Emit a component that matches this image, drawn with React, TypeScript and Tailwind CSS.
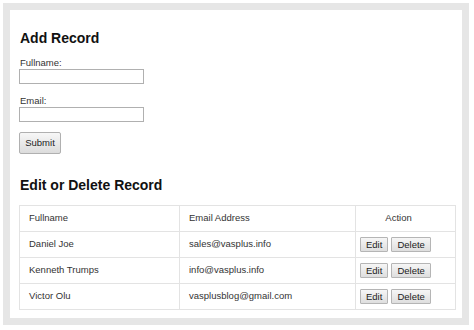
import React from 'react';

const records = [
  { name: 'Daniel Joe', email: 'sales@vasplus.info' },
  { name: 'Kenneth Trumps', email: 'info@vasplus.info' },
  { name: 'Victor Olu', email: 'vasplusblog@gmail.com' },
];

const SmallButton: React.FC<{ children: React.ReactNode }> = ({ children }) => (
  <button className="h-[15px] px-[5px] text-[9.5px] leading-none text-[#222] border border-[#b5b5b5] rounded-[1px] bg-gradient-to-b from-[#f6f6f6] to-[#dedede]">
    {children}
  </button>
);

export default function App() {
  return (
    <div className="w-[474px] h-[330px] bg-white p-[3px] font-['Liberation_Sans',Arial,sans-serif]">
      <div className="w-[466px] h-[322px] border-[7px] border-[#e6e6e6] bg-white pt-[20px] pl-[9px]">
        <h2 className="ml-[1px] text-[14px] leading-[16px] font-bold text-[#111]">Add Record</h2>

        <div className="mt-[11px] flex flex-col">
          <label className="ml-[1px] text-[9.5px] leading-[11px] text-[#333]">Fullname:</label>
          <input className="mt-px w-[125px] h-[15px] border border-[#b0b0b0] bg-white" />
          <label className="mt-[11px] ml-[1px] text-[9.5px] leading-[11px] text-[#333]">Email:</label>
          <input className="mt-px w-[125px] h-[15px] border border-[#b0b0b0] bg-white" />
          <button className="mt-[10px] w-[42px] h-[22px] text-[9.5px] text-[#222] border border-[#b0b0b0] rounded-[2px] bg-gradient-to-b from-[#f7f7f7] to-[#dcdcdc]">
            Submit
          </button>
        </div>

        <h2 className="mt-[23px] ml-[1px] text-[14px] leading-[16px] font-bold text-[#111]">Edit or Delete Record</h2>

        <table className="mt-[12px] w-[436px] table-fixed border-collapse text-[9.5px] text-[#333]">
          <colgroup>
            <col className="w-[160px]" />
            <col className="w-[176px]" />
            <col className="w-[100px]" />
          </colgroup>
          <thead>
            <tr className="h-[26px]">
              <th className="border border-[#e3e3e3] pl-[9px] text-left font-normal">Fullname</th>
              <th className="border border-[#e3e3e3] pl-[9px] text-left font-normal">Email Address</th>
              <th className="border border-[#e3e3e3] pr-[14px] text-center font-normal">Action</th>
            </tr>
          </thead>
          <tbody>
            {records.map((r) => (
              <tr key={r.name} className="h-[26px]">
                <td className="border border-[#e3e3e3] pl-[9px]">{r.name}</td>
                <td className="border border-[#e3e3e3] pl-[9px]">{r.email}</td>
                <td className="border border-[#e3e3e3] pl-[4px]">
                  <div className="flex gap-[3px]">
                    <SmallButton>Edit</SmallButton>
                    <SmallButton>Delete</SmallButton>
                  </div>
                </td>
              </tr>
            ))}
          </tbody>
        </table>
      </div>
    </div>
  );
}
